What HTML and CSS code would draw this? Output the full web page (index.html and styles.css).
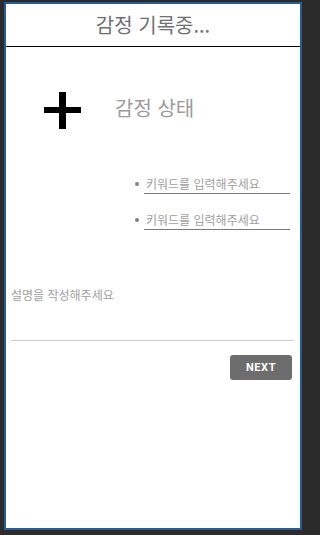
FILE: index.html
```html
<!DOCTYPE html>
<html lang="ko">
<head>
<meta charset="utf-8">
<title>감정 기록중...</title>
<link rel="stylesheet" href="styles.css">
</head>
<body>
<div class="frame">
  <header class="header">
    <h1 class="title">감정 기록중...</h1>
  </header>
  <section class="emotion">
    <svg class="plus" width="37" height="37" viewBox="0 0 37 37" aria-hidden="true">
      <rect x="15" y="0" width="7" height="37" fill="#000"/>
      <rect x="0" y="15" width="37" height="6" fill="#000"/>
    </svg>
    <span class="emotion-label">감정 상태</span>
  </section>
  <ul class="keywords">
    <li class="keyword"><span class="dot"></span><span class="field">키워드를 입력해주세요</span></li>
    <li class="keyword"><span class="dot"></span><span class="field">키워드를 입력해주세요</span></li>
  </ul>
  <div class="description">설명을 작성해주세요</div>
  <div class="actions">
    <button class="next">NEXT</button>
  </div>
</div>
</body>
</html>
```
FILE: styles.css
```css
html, body {
  margin: 0;
  padding: 0;
  background: #2b2b2b;
}
body {
  width: 306px;
  font-family: "Noto Sans CJK KR", "Noto Sans", sans-serif;
}
.frame {
  margin: 2px 0 0 4px;
  width: 294px;
  height: 524px;
  border: 2px solid #2a5b96;
  background: #ffffff;
  box-sizing: content-box;
}
.header {
  height: 42px;
  border-bottom: 1px solid #000;
  display: flex;
  align-items: center;
  justify-content: center;
}
.title {
  margin: 0;
  font-size: 20px;
  font-weight: 400;
  color: #707070;
  line-height: 24px;
}
.emotion {
  display: flex;
  align-items: center;
  margin-top: 45px;
  padding-left: 38px;
  height: 37px;
}
.plus {
  flex: none;
}
.emotion-label {
  margin-left: 34px;
  font-size: 20px;
  color: #9c9c9c;
  line-height: 24px;
  margin-bottom: 5px;
}
.keywords {
  list-style: none;
  margin: 46px 0 0 0;
  padding: 0 0 0 129px;
}
.keyword {
  display: flex;
  align-items: center;
  margin-bottom: 17px;
}
.keyword:last-child {
  margin-bottom: 0;
}
.dot {
  width: 4px;
  height: 4px;
  border-radius: 50%;
  background: #808080;
  margin-right: 5px;
  margin-bottom: 1px;
  flex: none;
}
.field {
  width: 146px;
  font-size: 12px;
  line-height: 18px;
  color: #a0a0a0;
  border-bottom: 1px solid #7a7a7a;
  padding-left: 2px;
  box-sizing: border-box;
}
.description {
  margin: 56px 6px 0 5px;
  height: 54px;
  font-size: 12px;
  line-height: 18px;
  color: #a0a0a0;
  border-bottom: 1px solid #cfcfcf;
}
.actions {
  display: flex;
  justify-content: flex-end;
  margin-top: 14px;
  padding-right: 8px;
}
.next {
  width: 62px;
  height: 25px;
  border: none;
  border-radius: 3px;
  background: #6d6d6d;
  color: #ffffff;
  font-family: Roboto, "Liberation Sans", sans-serif;
  font-weight: 700;
  font-size: 11px;
  letter-spacing: 0.6px;
  padding: 0;
}
```
